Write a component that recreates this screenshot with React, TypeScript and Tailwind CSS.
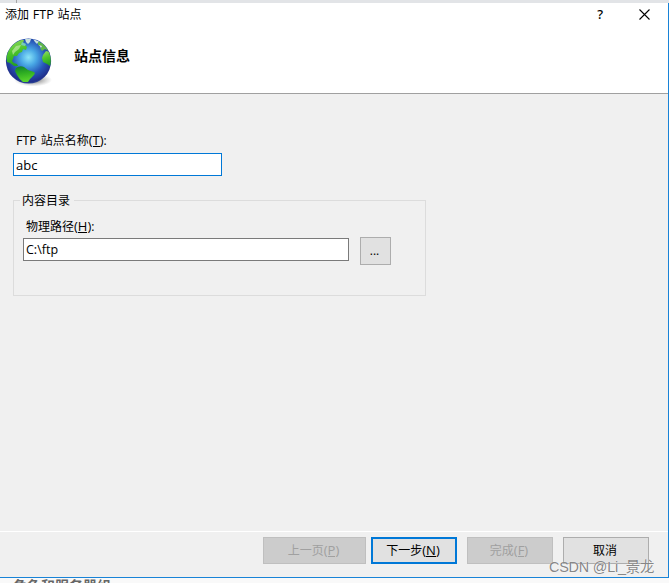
import React from "react";

function Globe() {
  return (
    <svg width="50" height="51" viewBox="0 0 50 51" className="block">
      <defs>
        <radialGradient id="sea" cx="50%" cy="42%" r="60%">
          <stop offset="0" stopColor="#8ae4f8" />
          <stop offset="0.3" stopColor="#48a6e4" />
          <stop offset="0.62" stopColor="#2756b8" />
          <stop offset="0.9" stopColor="#202f8c" />
          <stop offset="1" stopColor="#35589a" />
        </radialGradient>
        <linearGradient id="land" x1="0" y1="0" x2="0.3" y2="1">
          <stop offset="0" stopColor="#9fdc6c" />
          <stop offset="0.5" stopColor="#4fc62c" />
          <stop offset="1" stopColor="#24a024" />
        </linearGradient>
        <linearGradient id="south" x1="0" y1="0" x2="0.2" y2="1">
          <stop offset="0" stopColor="#0f7d2c" />
          <stop offset="0.5" stopColor="#2fae22" />
          <stop offset="1" stopColor="#58d32c" />
        </linearGradient>
        <radialGradient id="shade">
          <stop offset="0" stopColor="#444" stopOpacity="0.85" />
          <stop offset="1" stopColor="#888" stopOpacity="0" />
        </radialGradient>
        <clipPath id="disc">
          <circle cx="23.5" cy="24" r="22.3" />
        </clipPath>
      </defs>
      <ellipse cx="28" cy="43" rx="19" ry="6.5" fill="url(#shade)" />
      <circle cx="23.5" cy="24" r="22.6" fill="url(#sea)" />
      <g clipPath="url(#disc)">
        <path d="M1 18 Q4 8 14 3 L19 3 L18 6 L20 8 L22 10 L21 13 L18 12 L17 15 L14 16 L12 19 L9 19 L8 22 L7 24 L9 26 L12 27 L13 29 L9 29 L5 26 L2 25Z" fill="url(#land)" />
        <path d="M11 31 Q15 28 19 30 L23 33 L29 35 Q31 36 28 39 L25 42 L23 45 L18 45 Q14 42 12 38 L10 34Z" fill="url(#south)" />
        <path d="M38 18 L41 14 L45 15 L48 24 L45 29 L42 27 L38 25 L37 21Z" fill="url(#land)" />
        <path d="M33 4 L39 7 L44 14 L40 12 L37 14 L35 11 L37 10 L33 8Z" fill="#5fb64a" />
        <path d="M20 2 L26 2 L25 5 L23 7 L21 5Z M28 2 L34 4 L32 7 L30 5Z M34 8 L37 9 L36 11Z" fill="#d9f0e0" opacity="0.9" />
        <path d="M7 14 L11 9 L16 8 L14 12 L10 15 L8 18Z" fill="#c6ebae" opacity="0.65" />
        <path d="M17 5 L21 7 L20 9 L16 8Z" fill="#79cdb5" />
      </g>
    </svg>
  );
}

function Key({ children }: { children: string }) {
  return (
    <span className="text-[13px]">
      (<span className="inline-block h-[14px] border-b border-current align-top leading-[14px]">{children}</span>)
    </span>
  );
}

export default function App() {
  return (
    <div className="relative flex h-[583px] w-[669px] flex-col overflow-hidden bg-[#f9f9f9] font-['Open_Sans','Noto_Sans_CJK_SC',sans-serif] text-[12px] leading-[14px] text-black [word-spacing:0.7px]">
      <div className="h-[3px] shrink-0 bg-[#e2e4e7] pl-4">
        <div className="h-full w-px bg-[#a5a5a5]" />
      </div>
      <div className="flex h-[575px] shrink-0 flex-col border-r border-b border-[#1883d7] bg-[#f0f0f0]">
        <header className="h-[91px] shrink-0 border-b border-[#a0a0a0] bg-white">
          <div className="flex h-6 items-center pl-[5px]">
            <span className="whitespace-nowrap">添加 <span className="text-[12.5px]">FTP</span> 站点</span>
            <span className="mr-[36px] ml-auto pb-[2px] font-['Noto_Sans'] text-[13px] font-medium">?</span>
            <svg width="11" height="11" viewBox="0 0 11 11" className="mr-[18px] mb-[2px]">
              <path d="M.5 .5 10.5 10.5M10.5 .5.5 10.5" stroke="#000" strokeWidth="1.1" />
            </svg>
          </div>
          <div className="flex pt-[10px] pl-[5px]">
            <Globe />
            <h1 className="mt-[11px] ml-[19px] text-[14px] leading-4 font-bold">站点信息</h1>
          </div>
        </header>
        <main className="h-[437px] shrink-0 pt-[39px] pl-[13px]">
          <label className="block h-5 pl-[3px]"><span className="text-[12.5px]">FTP</span> 站点名称<Key>T</Key>:</label>
          <div className="flex h-[23px] w-[209px] items-center border border-[#0078d7] bg-white pl-[2px] text-[13px]">abc</div>
          <section className="mt-6 h-24 w-[413px] border border-[#dcdcdc] pl-[9px]">
            <div className="-mt-[7px] -ml-[3px] w-[54px] bg-[#f0f0f0] pl-[2px]">内容目录</div>
            <div className="mt-[11px] h-[19px] pl-[3px]">物理路径<Key>H</Key>:</div>
            <div className="-mt-px flex items-start">
              <div className="mt-px flex h-[23px] w-[326px] items-center border border-[#7a7a7a] bg-white pl-[2px] text-[12.5px]">C:\ftp</div>
              <button className="ml-[11px] h-7 w-[31px] border border-[#adadad] bg-[#e1e1e1] pr-[2px]">...</button>
            </div>
          </section>
        </main>
        <footer className="flex flex-1 items-start border-t border-white pt-[5px] pl-[263px]">
          <button className="h-[27px] w-[103px] border border-[#bfbfbf] bg-[#cccccc] pr-[2px] text-[#a0a0a0]">上一页<Key>P</Key></button>
          <button className="ml-[5px] h-[27px] w-[86px] border-2 border-[#0078d7] bg-[#e1e1e1] pr-[2px]">下一步<Key>N</Key></button>
          <button className="ml-[10px] h-[27px] w-[86px] border border-[#bfbfbf] bg-[#cccccc] pr-[2px] text-[#a0a0a0]">完成<Key>F</Key></button>
          <button className="ml-[10px] h-[27px] w-[86px] border border-[#adadad] bg-[#e1e1e1] pr-[2px]">取消</button>
        </footer>
      </div>
      <div className="h-[5px] overflow-hidden pl-[13px] text-[14px] leading-4 font-bold text-[#666]">角色和服务器组</div>
      <div className="absolute top-[558px] left-[549px] font-['Liberation_Sans','Noto_Sans_CJK_SC'] text-[14.4px] leading-[18px] tracking-[-0.2px] whitespace-nowrap text-[#777]/90 [text-shadow:0_0_1px_white] [word-spacing:0]">CSDN @Li_景龙</div>
    </div>
  );
}
